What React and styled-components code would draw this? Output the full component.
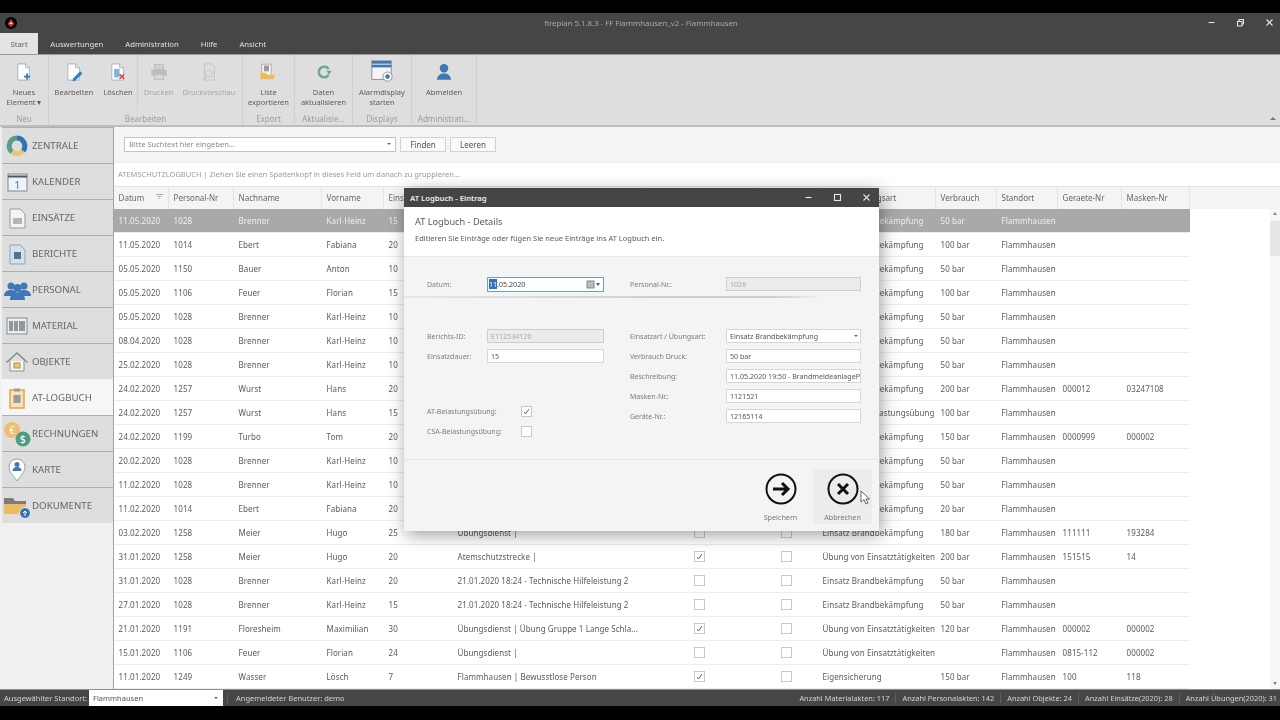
import React from 'react'
import styled, {createGlobalStyle} from 'styled-components'

const GlobalStyle = createGlobalStyle`
html, body {
  margin: 0;
  padding: 0;
  background: #000;
  font-family: "Noto Sans", "Liberation Sans", sans-serif;
}
* { box-sizing: border-box; }
`

const Screen = styled('div')`
  position: relative;
  width: 1280px;
  height: 720px;
  overflow: hidden;
  background: #000;
  padding: 13px 0 14px;
`

const Win = styled('div')`
  display: flex;
  flex-direction: column;
  height: 693px;
  background: #f2f2f2;
  filter: blur(0.35px);
`

const TitleBar = styled('div')`
  position: relative;
  display: flex;
  align-items: center;
  justify-content: center;
  flex: 0 0 20px;
  padding-left: 2px;
  background: #464646;
  color: #a8a8a8;
  font-size: 7.800px;
`

const Logo = styled('svg')`
  position: absolute;
  left: 5px;
  top: 4px;
`

const WinButtons = styled('div')`
  position: absolute;
  right: 6px;
  top: 5px;
  display: flex;
  gap: 20px;
`

const Tabs = styled('div')`
  display: flex;
  flex: 0 0 21px;
  background: #464646;
  font-size: 7.700px;
`

const Tab = styled('div')`
  display: flex;
  align-items: center;
  padding: 0 ${p => (p.$active ? '10.500px' : '11px')};
  color: ${p => (p.$active ? '#666' : '#e0e0e0')};
  background: ${p => (p.$active ? '#e4e4e4' : 'transparent')};
  &:first-child { margin-right: 1px; }
`

const Ribbon = styled('div')`
  position: relative;
  display: flex;
  flex: 0 0 73px;
  background: #dedede;
  border-top: 1px solid #9a9a9a;
  border-bottom: 2px solid #bdbdbd;
`

const RibbonGroup = styled('div')`
  display: flex;
  flex-direction: column;
  flex: 0 0 ${p => p.$w}px;
  border-right: 1px solid #d0d0d0;
`

const GroupItems = styled('div')`
  display: flex;
  flex: 1;
`

const GroupName = styled('div')`
  flex: 0 0 15px;
  min-height: 0;
  text-align: center;
  font-size: 8px;
  line-height: 17px;
  color: #9c9c9c;
  white-space: nowrap;
`

const RibbonItem = styled('div')`
  display: flex;
  flex-direction: column;
  align-items: center;
  flex: 0 0 ${p => p.$w}px;
  padding-top: 4px;
  font-size: 7.500px;
  line-height: 10px;
  text-align: center;
  color: ${p => (p.$off ? '#a6a6a6' : '#5c5c5c')};
  white-space: pre-line;
  border-right: ${p => (p.$rule ? '1px solid #d0d0d0' : 'none')};
`

const RibbonIcon = styled('div')`
  height: 25px;
  margin-bottom: 3px;
  display: flex;
  align-items: center;
  justify-content: center;
  & svg {
    width: ${p => (p.$big ? 24 : 20)}px;
    height: ${p => (p.$big ? 24 : 20)}px;
  }
`

const Collapse = styled('div')`
  position: absolute;
  right: 4px;
  bottom: 5px;
  width: 0;
  height: 0;
  border-left: 3px solid transparent;
  border-right: 3px solid transparent;
  border-bottom: 3px solid #777;
`

const Main = styled('div')`
  display: flex;
  flex: 1;
  min-height: 0;
`

const Side = styled('div')`
  display: flex;
  flex-direction: column;
  flex: 0 0 114px;
  padding-left: 2px;
  background: #f0f0f0;
  border-right: 1px solid #a3a3a3;
`

const SideItem = styled('div')`
  display: flex;
  align-items: center;
  height: 36px;
  background: ${p => (p.$active ? '#f6f6f6' : '#dedede')};
  border-top: 1px solid ${p => (p.$active ? '#f6f6f6' : '#aeaeae')};
  font-size: 9.700px;
  color: #666;
`

const SideIcon = styled('div')`
  display: flex;
  align-items: center;
  justify-content: center;
  flex: 0 0 30px;
`

const Content = styled('div')`
  display: flex;
  flex-direction: column;
  flex: 1;
  min-width: 0;
`

const SearchBar = styled('div')`
  display: flex;
  align-items: center;
  flex: 0 0 35px;
  padding: 0 0 1px 10px;
  gap: 4px;
  background: #f5f5f5;
  font-size: 8px;
`

const SearchInput = styled('div')`
  display: flex;
  align-items: center;
  justify-content: space-between;
  width: 272px;
  height: 15px;
  padding: 0 4px;
  background: #fff;
  border: 1px solid #c4c4c4;
  color: #8a8a8a;
  font-size: 7.500px;
`

const Caret = styled('span')`
  flex: none;
  width: 0;
  height: 0;
  border-left: 2px solid transparent;
  border-right: 2px solid transparent;
  border-top: 2px solid #666;
`

const PlainButton = styled('div')`
  display: flex;
  align-items: center;
  justify-content: center;
  width: 46px;
  height: 15px;
  background: #fafafa;
  border: 1px solid #d2d2d2;
  color: #555;
`

const GroupPanel = styled('div')`
  display: flex;
  align-items: center;
  flex: 0 0 24px;
  padding: 0 0 2px 4px;
  background: #fff;
  border-top: 1px solid #ececec;
  color: #9a9a9a;
  font-size: 7.500px;
`

const TableWrap = styled('div')`
  position: relative;
  flex: 1;
  min-height: 0;
  background: #fff;
`

const cols = '55px 65px 88px 62px 69px 192px 109px 64px 118px 61px 61px 64px 68px'

const HeadRow = styled('div')`
  display: grid;
  grid-template-columns: ${cols};
  height: 23px;
  background: #f4f4f4;
  border-top: 1px solid #e4e4e4;
`

const HeadCell = styled('div')`
  position: relative;
  display: flex;
  align-items: center;
  padding: 0 0 2px 4.600px;
  font-size: 8px;
  color: #666;
  border-right: 1px solid #e4e4e4;
  white-space: nowrap;
  overflow: hidden;
`

const SortMark = styled('svg')`
  position: absolute;
  right: 5px;
  top: 7px;
`

const Row = styled('div')`
  display: grid;
  grid-template-columns: ${cols};
  width: 1076px;
  height: 24px;
  background: ${p => (p.$sel ? '#a9a9a9' : '#fff')};
  color: ${p => (p.$sel ? '#efefef' : '#5a5a5a')};
  border-bottom: 1px solid #ededed;
`

const Cell = styled('div')`
  display: flex;
  align-items: center;
  justify-content: ${p => (p.$center ? 'center' : 'flex-start')};
  padding-left: ${p => (p.$center ? '0' : '4.600px')};
  font-size: 8px;
  letter-spacing: 0.07px;
  white-space: nowrap;
  overflow: hidden;
`

const Tick = styled('span')`
  display: flex;
  align-items: center;
  justify-content: center;
  flex: none;
  width: 11px;
  height: 11px;
  background: #fff;
  border: 1px solid #c8c8c8;
  color: #666;
`

const Scroll = styled('div')`
  position: absolute;
  right: 0;
  top: 23px;
  bottom: 0;
  width: 10px;
  background: #f7f7f7;
  display: flex;
  flex-direction: column;
  align-items: center;
  padding-top: 3px;
`

const ScrollUp = styled('span')`
  width: 0;
  height: 0;
  border-left: 2px solid transparent;
  border-right: 2px solid transparent;
  border-bottom: 3px solid #888;
`

const ScrollThumb = styled('span')`
  width: 100%;
  height: 35px;
  margin-top: 6px;
  background: #e6e6e6;
`

const ScrollDown = styled('span')`
  margin-top: auto;
  margin-bottom: 4px;
  width: 0;
  height: 0;
  border-left: 2px solid transparent;
  border-right: 2px solid transparent;
  border-top: 3px solid #888;
`

const StatusBar = styled('div')`
  display: flex;
  align-items: center;
  flex: 0 0 17px;
  padding: 0 3px 0 4px;
  background: #464646;
  border-top: 1px solid #8e8e8e;
  color: #d4d4d4;
  font-size: 7.500px;
  white-space: nowrap;
`

const StandortBox = styled('div')`
  display: flex;
  align-items: center;
  justify-content: space-between;
  width: 134px;
  height: 16px;
  margin: 0 4px 0 2px;
  padding: 0 5px 0 4px;
  background: #fff;
  color: #555;
`

const StatusCell = styled('div')`
  padding: 0 ${p => (p.$last ? '0' : '6px')} 0 ${p => (p.$first ? '8px' : '6px')};
  font-size: ${p => (p.$first ? '7.500px' : '7.400px')};
  border-left: ${p => (p.$plain ? 'none' : '1px solid #5e5e5e')};
  margin-left: ${p => (p.$push ? 'auto' : '0')};
`

const Modal = styled('div')`
  position: absolute;
  left: 404px;
  top: 188px;
  display: flex;
  flex-direction: column;
  width: 475px;
  height: 343px;
  background: #f4f4f4;
  box-shadow: 2px 4px 16px rgba(0, 0, 0, 0.38);
  filter: blur(0.35px);
`

const ModalTitle = styled('div')`
  position: relative;
  display: flex;
  align-items: center;
  flex: 0 0 19px;
  padding-left: 6px;
  background: #454545;
  color: #ececec;
  font-size: 7.700px;
  font-weight: 600;
`

const ModalButtons = styled('div')`
  position: absolute;
  right: 8.500px;
  top: 5px;
  display: flex;
  gap: 20px;
`

const ModalHead = styled('div')`
  flex: 0 0 50px;
  padding: 9px 11px 0;
  background: #fff;
  border-bottom: 1px solid #eaeaea;
  color: #5a5a5a;
`

const ModalHeading = styled('div')`
  font-size: 9.200px;
  line-height: 12px;
  margin-bottom: 4px;
`

const ModalSub = styled('div')`
  font-size: 7.500px;
  line-height: 12px;
`

const FormTop = styled('div')`
  display: flex;
  flex: 0 0 39px;
  padding: 20px 0 0 23px;
`

const Rule = styled('div')`
  flex: none;
  width: 414px;
  height: 2px;
  background: linear-gradient(to right, #e6e6e6, #cfcfcf 60%, #cfcfcf 90%, #efefef);
`

const FormCols = styled('div')`
  display: flex;
  flex: none;
  padding: 31px 0 0 23px;
`

const FormCol = styled('div')`
  display: flex;
  flex-direction: column;
  gap: 6px;
  width: ${p => p.$w}px;
`

const Field = styled('div')`
  display: flex;
  align-items: center;
  height: 14px;
  margin-top: ${p => p.$mt || 0}px;
`

const Label = styled('div')`
  flex: 0 0 ${p => p.$w}px;
  min-width: 0;
  margin-left: ${p => p.$ml || 0}px;
  font-size: 7px;
  color: #7c7c7c;
  white-space: nowrap;
`

const Input = styled('div')`
  display: flex;
  align-items: center;
  justify-content: space-between;
  flex: none;
  width: ${p => p.$w}px;
  height: 14px;
  padding: 0 2px 0 3px;
  background: ${p => (p.$off ? '#ececec' : '#fff')};
  border: 1px solid ${p => (p.$off ? '#cdcdcd' : '#d6d6d6')};
  color: ${p => (p.$off ? '#a8a8a8' : '#555')};
  font-size: 7.100px;
  white-space: nowrap;
  overflow: hidden;
`

const DateInput = styled(Input)`
  height: 15px;
  padding: 0 3px 0 1px;
  border-color: #6f9ecb;
  color: #444;
`

const Selected = styled('span')`
  background: #2d74bd;
  color: #fff;
`

const FormCheck = styled(Tick)`
  margin-left: 34px;
`

const ModalFoot = styled('div')`
  display: flex;
  justify-content: flex-end;
  gap: 3px;
  flex: 1;
  margin-top: 21px;
  padding: 9px 7px 0 0;
  border-top: 1px solid #e6e6e6;
`

const Action = styled('div')`
  position: relative;
  display: flex;
  flex-direction: column;
  align-items: center;
  width: 59px;
  height: 55px;
  padding: 3.500px 0 2px;
  background: ${p => (p.$hover ? '#ececec' : 'transparent')};
  font-size: 7.200px;
  color: #7a7a7a;
  & > svg:first-child { flex: none; }
`

const ActionText = styled('div')`
  margin-top: auto;
`

const Cursor = styled('svg')`
  position: absolute;
  left: 47px;
  top: 21px;
`

const WinGlyph = ({type, size = 9}) => (
  <svg width={size} height={size} viewBox="0 0 9 9" fill="none" stroke="#e4e4e4" strokeWidth="1.100">
    {type === 'min' && <path d="M1.500 4.500h6" />}
    {type === 'max' && <rect x="1.500" y="1.500" width="6" height="6" />}
    {type === 'restore' && <path d="M1.500 3.500h4.500v4.500h-4.500zM3 3.500v-2h4.500v4.500h-1.500" />}
    {type === 'close' && <path d="M1.500 1.500l6 6M7.500 1.500l-6 6" />}
  </svg>
)

const Doc = ({children, stroke = '#9aa5ae'}) => (
  <svg width="26" height="26" viewBox="0 0 26 26" fill="none">
    <path d="M5 2.500h10l5 5v16h-15z" fill="#fff" stroke={stroke} />
    <path d="M15 2.500v5h5" fill="#e8e8e8" stroke={stroke} />
    {children}
  </svg>
)

const icons = {
  neu: (
    <Doc>
      <path d="M17 15v8M13 19h8" stroke="#2f7fc1" strokeWidth="2.400" />
    </Doc>
  ),
  edit: (
    <Doc>
      <path d="M12 21l9-9 3 3-9 9-4 1z" fill="#2f7fc1" />
    </Doc>
  ),
  del: (
    <Doc>
      <rect x="8" y="9" width="7" height="11" fill="#7fb2de" />
      <path d="M15 16l6 6M21 16l-6 6" stroke="#d9472b" strokeWidth="2" />
    </Doc>
  ),
  print: (
    <svg width="26" height="26" viewBox="0 0 26 26" fill="#bdbdbd">
      <rect x="7" y="3" width="12" height="7" fill="#cfcfcf" stroke="#b8b8b8" />
      <rect x="3" y="10" width="20" height="8" rx="1" />
      <rect x="7" y="16" width="12" height="7" fill="#d6d6d6" stroke="#b8b8b8" />
    </svg>
  ),
  preview: (
    <svg width="26" height="26" viewBox="0 0 26 26" fill="none" stroke="#bebebe">
      <path d="M7 2.500h9l4 4v17h-13z" />
      <circle cx="13" cy="15" r="4.500" />
      <path d="M10 18.500l-4 4" strokeWidth="1.600" />
    </svg>
  ),
  list: (
    <svg width="28" height="26" viewBox="0 0 28 26">
      <rect x="4" y="2" width="13" height="16" fill="#f4f4f4" stroke="#9a9a9a" />
      <rect x="7" y="4" width="7" height="8" fill="#9a9a9a" />
      <path d="M2 14h8l2 3h11l-3 6H2z" fill="#eebb55" />
    </svg>
  ),
  refresh: (
    <svg width="26" height="26" viewBox="0 0 26 26" fill="none">
      <path d="M19 17a7 7 0 1 1 0-8" stroke="#6ba596" strokeWidth="3.200" />
      <path d="M16 11.500h7l-3.500 5z" fill="#6ba596" />
    </svg>
  ),
  alarm: (
    <svg width="26" height="26" viewBox="0 0 26 26">
      <rect x="2" y="1" width="21" height="20" fill="#f5f5f5" stroke="#8b8b8b" />
      <rect x="2" y="1" width="21" height="3" fill="#3f78b5" />
      <rect x="2" y="5" width="21" height="3" fill="#3f78b5" />
      <circle cx="19" cy="18" r="5" fill="#fff" stroke="#8b8b8b" />
      <circle cx="19" cy="18" r="2.500" fill="#3f78b5" />
    </svg>
  ),
  user: (
    <svg width="26" height="26" viewBox="0 0 26 26" fill="#3b78b4">
      <circle cx="13" cy="8" r="5.500" />
      <path d="M4 23c0-5 4-7 6-8h6c2 1 6 3 6 8z" />
    </svg>
  ),
  zentrale: (
    <svg width="24" height="24" viewBox="0 0 24 24" fill="none" strokeWidth="5">
      <path d="M12 4a8 8 0 0 0-5 14" stroke="#5b9c8b" />
      <path d="M12 4a8 8 0 0 1 6 13" stroke="#2f74b5" />
      <path d="M7 18a8 8 0 0 0 11-1" stroke="#e3c878" />
    </svg>
  ),
  kalender: (
    <svg width="24" height="24" viewBox="0 0 24 24">
      <rect x="3" y="4" width="19" height="17" fill="#eef3f7" stroke="#7d8a94" />
      <path d="M3 6.500h19" stroke="#555" strokeWidth="2" />
      <text x="12.500" y="18.500" textAnchor="middle" fontSize="11" fill="#3f78b5" fontFamily="Noto Sans, sans-serif">1</text>
    </svg>
  ),
  einsatz: (
    <svg width="24" height="24" viewBox="0 0 24 24">
      <path d="M5 3h10l5 5v14H5z" fill="#f4f4f4" stroke="#9a9a9a" />
      <rect x="8" y="12" width="9" height="6" fill="#b5b5b5" />
    </svg>
  ),
  bericht: (
    <svg width="24" height="24" viewBox="0 0 24 24">
      <path d="M5 3h10l5 5v14H5z" fill="#cfe1f2" stroke="#8ea4b8" />
      <rect x="9" y="10" width="7" height="7" fill="#5c7084" />
    </svg>
  ),
  personal: (
    <svg width="27" height="24" viewBox="0 0 27 24" fill="#3f78b5">
      <circle cx="7" cy="8" r="3.500" />
      <circle cx="20" cy="8" r="3.500" />
      <path d="M0 18c0-4 3-6 7-6s7 2 7 6zM13 18c0-4 3-6 7-6s7 2 7 6z" />
      <circle cx="13.500" cy="10" r="4" />
      <path d="M6 22c0-5 3-7 7.500-7s7.500 2 7.500 7z" />
    </svg>
  ),
  material: (
    <svg width="24" height="20" viewBox="0 0 24 20">
      <rect x="2" y="2" width="20" height="16" fill="#e8eef4" stroke="#7e8c99" />
      <path d="M5 5v10M7 5v10M10 5v10M12 5v10M15 5v10M17 5v10M19 5v10" stroke="#5b5b5b" strokeWidth="1.200" />
    </svg>
  ),
  objekte: (
    <svg width="24" height="24" viewBox="0 0 24 24" fill="none">
      <path d="M1.500 12.500L12 3l10.500 9.500" stroke="#7f8a8f" strokeWidth="1.500" />
      <path d="M5 11v10h14V11" fill="#f6f6f6" stroke="#8d8d8d" />
      <rect x="9" y="13" width="6" height="5" fill="#e8c478" stroke="#b8913f" />
    </svg>
  ),
  logbuch: (
    <svg width="24" height="24" viewBox="0 0 24 24">
      <rect x="5" y="4" width="14" height="18" fill="#f3e3bf" stroke="#e3ac48" strokeWidth="1.600" />
      <rect x="9" y="2.500" width="6" height="3" fill="#9a9a9a" />
      <rect x="8.500" y="9" width="7" height="8" fill="#9a9a9a" />
    </svg>
  ),
  rechnung: (
    <svg width="30" height="28" viewBox="0 0 30 28">
      <circle cx="10" cy="10" r="8" fill="#eebf73" />
      <text x="10" y="13.500" textAnchor="middle" fontSize="10" fill="#fff" fontFamily="Noto Sans, sans-serif">€</text>
      <circle cx="21" cy="19" r="7.500" fill="#4f9c84" />
      <text x="21" y="23" textAnchor="middle" fontSize="11" fill="#fff" fontFamily="Noto Sans, sans-serif">$</text>
    </svg>
  ),
  karte: (
    <svg width="24" height="26" viewBox="0 0 24 26">
      <path d="M12 24C8 18 4 15 4 10a8 8 0 0 1 16 0c0 5-4 8-8 14z" fill="#fff" stroke="#a0a0a0" />
      <circle cx="12" cy="7.500" r="2.500" fill="#3f78b5" />
      <path d="M7.500 14c0-3 2-4 4.500-4s4.500 1 4.500 4z" fill="#3f78b5" />
    </svg>
  ),
  dokumente: (
    <svg width="30" height="26" viewBox="0 0 30 26">
      <path d="M2 5h9l2 3h11v8H2z" fill="#7c7c7c" />
      <path d="M2 11h22v10H2z" fill="#e9bc62" />
      <circle cx="23" cy="20" r="5.500" fill="#3874b3" stroke="#f0f0f0" />
      <path d="M23 23v-5M21 20l2-2 2 2" stroke="#fff" fill="none" />
    </svg>
  ),
}

const sideItems = [
  ['zentrale', 'ZENTRALE'],
  ['kalender', 'KALENDER'],
  ['einsatz', 'EINSÄTZE'],
  ['bericht', 'BERICHTE'],
  ['personal', 'PERSONAL'],
  ['material', 'MATERIAL'],
  ['objekte', 'OBJEKTE'],
  ['logbuch', 'AT-LOGBUCH'],
  ['rechnung', 'RECHNUNGEN'],
  ['karte', 'KARTE'],
  ['dokumente', 'DOKUMENTE'],
]

// the middle three headers sit fully behind the dialog
const heads = ['Datum', 'Personal-Nr', 'Nachname', 'Vorname', 'Einsatzdauer', '', '', '', 'Einsatz / Übungsart', 'Verbrauch', 'Standort', 'Geraete-Nr', 'Masken-Nr']

const brand = 'Einsatz Brandbekämpfung'
const uebung = 'Übung von Einsatztätigkeiten'
const th2 = '21.01.2020 18:24 - Technische Hilfeleistung 2'

const rows = [
  ['11.05.2020', '1028', 'Brenner', 'Karl-Heinz', '15', '', 1, 0, brand, '50 bar', '', ''],
  ['11.05.2020', '1014', 'Ebert', 'Fabiana', '20', '', 0, 0, brand, '100 bar', '', ''],
  ['05.05.2020', '1150', 'Bauer', 'Anton', '10', '', 0, 0, brand, '50 bar', '', ''],
  ['05.05.2020', '1106', 'Feuer', 'Florian', '15', '', 0, 0, brand, '100 bar', '', ''],
  ['05.05.2020', '1028', 'Brenner', 'Karl-Heinz', '10', '', 0, 0, brand, '50 bar', '', ''],
  ['08.04.2020', '1028', 'Brenner', 'Karl-Heinz', '10', '', 0, 0, brand, '50 bar', '', ''],
  ['25.02.2020', '1028', 'Brenner', 'Karl-Heinz', '10', '', 0, 0, brand, '50 bar', '', ''],
  ['24.02.2020', '1257', 'Wurst', 'Hans', '20', '', 0, 0, brand, '200 bar', '000012', '03247108'],
  ['24.02.2020', '1257', 'Wurst', 'Hans', '15', '', 0, 0, 'Atemschutzbelastungsübung', '100 bar', '', ''],
  ['24.02.2020', '1199', 'Turbo', 'Tom', '20', '', 0, 0, brand, '150 bar', '0000999', '000002'],
  ['20.02.2020', '1028', 'Brenner', 'Karl-Heinz', '10', '', 0, 0, brand, '50 bar', '', ''],
  ['11.02.2020', '1028', 'Brenner', 'Karl-Heinz', '10', '', 0, 0, brand, '50 bar', '', ''],
  ['11.02.2020', '1014', 'Ebert', 'Fabiana', '20', '', 0, 0, brand, '20 bar', '', ''],
  ['03.02.2020', '1258', 'Meier', 'Hugo', '25', 'Übungsdienst |', 0, 0, brand, '180 bar', '111111', '193284'],
  ['31.01.2020', '1258', 'Meier', 'Hugo', '20', 'Atemschutzstrecke |', 1, 0, uebung, '200 bar', '151515', '14'],
  ['31.01.2020', '1028', 'Brenner', 'Karl-Heinz', '20', th2, 0, 0, brand, '50 bar', '', ''],
  ['27.01.2020', '1028', 'Brenner', 'Karl-Heinz', '15', th2, 0, 0, brand, '50 bar', '', ''],
  ['21.01.2020', '1191', 'Floresheim', 'Maximilian', '30', 'Übungsdienst | Übung Gruppe 1  Lange Schla...', 1, 0, uebung, '120 bar', '000002', '000002'],
  ['15.01.2020', '1106', 'Feuer', 'Florian', '24', 'Übungsdienst |', 0, 0, uebung, '', '0815-112', '000002'],
  ['11.01.2020', '1249', 'Wasser', 'Lösch', '7', 'Flammhausen | Bewusstlose Person', 1, 0, 'Eigensicherung', '150 bar', '100', '118'],
]

const TickMark = () => (
  <svg width="7" height="7" viewBox="0 0 7 7" fill="none" stroke="#666">
    <path d="M1 4l1.500 2L6 1" />
  </svg>
)

const CircleButton = ({children}) => (
  <svg width="32" height="32" viewBox="0 0 32 32" fill="none" stroke="#111">
    <circle cx="16" cy="16" r="14.500" strokeWidth="2" />
    {children}
  </svg>
)

export default function App() {
  return (
    <Screen>
      <GlobalStyle />
      <Win>
        <TitleBar>
          <Logo width="12" height="12" viewBox="0 0 12 12">
            <circle cx="6" cy="6" r="6" fill="#000" />
            <path d="M6 2l3.500 5-3.500 3-3.500-3z" fill="#d8343a" />
            <path d="M6 5l1.500 2H4.500z" fill="#fff" />
          </Logo>
          fireplan 5.1.8.3 - FF Flammhausen_v2 - Flammhausen
          <WinButtons>
            <WinGlyph type="min" />
            <WinGlyph type="restore" />
            <WinGlyph type="close" />
          </WinButtons>
        </TitleBar>
        <Tabs>
          <Tab $active>Start</Tab>
          <Tab>Auswertungen</Tab>
          <Tab>Administration</Tab>
          <Tab>Hilfe</Tab>
          <Tab>Ansicht</Tab>
        </Tabs>
        <Ribbon>
          <RibbonGroup $w={49}>
            <GroupItems>
              <RibbonItem $w={48}><RibbonIcon>{icons.neu}</RibbonIcon>{'Neues\nElement ▾'}</RibbonItem>
            </GroupItems>
            <GroupName>Neu</GroupName>
          </RibbonGroup>
          <RibbonGroup $w={194}>
            <GroupItems>
              <RibbonItem $w={50}><RibbonIcon>{icons.edit}</RibbonIcon>Bearbeiten</RibbonItem>
              <RibbonItem $w={39} $rule><RibbonIcon>{icons.del}</RibbonIcon>Löschen</RibbonItem>
              <RibbonItem $w={41} $off><RibbonIcon>{icons.print}</RibbonIcon>Drucken</RibbonItem>
              <RibbonItem $w={60} $off><RibbonIcon>{icons.preview}</RibbonIcon>Druckvorschau</RibbonItem>
            </GroupItems>
            <GroupName>Bearbeiten</GroupName>
          </RibbonGroup>
          <RibbonGroup $w={52}>
            <GroupItems>
              <RibbonItem $w={51}><RibbonIcon>{icons.list}</RibbonIcon>{'Liste\nexportieren'}</RibbonItem>
            </GroupItems>
            <GroupName>Export</GroupName>
          </RibbonGroup>
          <RibbonGroup $w={58}>
            <GroupItems>
              <RibbonItem $w={57}><RibbonIcon>{icons.refresh}</RibbonIcon>{'Daten\naktualisieren'}</RibbonItem>
            </GroupItems>
            <GroupName>Aktualisie...</GroupName>
          </RibbonGroup>
          <RibbonGroup $w={59}>
            <GroupItems>
              <RibbonItem $w={58}><RibbonIcon $big>{icons.alarm}</RibbonIcon>{'Alarmdisplay\nstarten'}</RibbonItem>
            </GroupItems>
            <GroupName>Displays</GroupName>
          </RibbonGroup>
          <RibbonGroup $w={65}>
            <GroupItems>
              <RibbonItem $w={64}><RibbonIcon>{icons.user}</RibbonIcon>Abmelden</RibbonItem>
            </GroupItems>
            <GroupName>Administrati...</GroupName>
          </RibbonGroup>
          <Collapse />
        </Ribbon>
        <Main>
          <Side>
            {sideItems.map(([key, label]) => (
              <SideItem key={key} $active={key === 'logbuch'}>
                <SideIcon>{icons[key]}</SideIcon>
                {label}
              </SideItem>
            ))}
          </Side>
          <Content>
            <SearchBar>
              <SearchInput>
                Bitte Suchtext hier eingeben...
                <Caret />
              </SearchInput>
              <PlainButton>Finden</PlainButton>
              <PlainButton>Leeren</PlainButton>
            </SearchBar>
            <GroupPanel>ATEMSCHUTZLOGBUCH | Ziehen Sie einen Spaltenkopf in dieses Feld um danach zu gruppieren...</GroupPanel>
            <TableWrap>
              <HeadRow>
                {heads.map((h, i) => (
                  <HeadCell key={i}>
                    {h}
                    {i === 0 && (
                      <SortMark width="7" height="6" viewBox="0 0 7 6" stroke="#aaa" fill="none">
                        <path d="M0 .5h7M1.500 2.500h4M3 4.500h1" />
                      </SortMark>
                    )}
                  </HeadCell>
                ))}
              </HeadRow>
              {rows.map((r, i) => (
                <Row key={i} $sel={i === 0}>
                  <Cell>{r[0]}</Cell>
                  <Cell>{r[1]}</Cell>
                  <Cell>{r[2]}</Cell>
                  <Cell>{r[3]}</Cell>
                  <Cell>{r[4]}</Cell>
                  <Cell>{r[5]}</Cell>
                  <Cell $center><Tick>{r[6] ? <TickMark /> : null}</Tick></Cell>
                  <Cell $center><Tick>{r[7] ? <TickMark /> : null}</Tick></Cell>
                  <Cell>{r[8]}</Cell>
                  <Cell>{r[9]}</Cell>
                  <Cell>Flammhausen</Cell>
                  <Cell>{r[10]}</Cell>
                  <Cell>{r[11]}</Cell>
                </Row>
              ))}
              <Scroll>
                <ScrollUp />
                <ScrollThumb />
                <ScrollDown />
              </Scroll>
            </TableWrap>
          </Content>
        </Main>
        <StatusBar>
          Ausgewählter Standort:
          <StandortBox>
            Flammhausen
            <Caret />
          </StandortBox>
          <StatusCell $first>Angemeldeter Benutzer: demo</StatusCell>
          <StatusCell $push $plain>Anzahl Materialakten: 117</StatusCell>
          <StatusCell>Anzahl Personalakten: 142</StatusCell>
          <StatusCell>Anzahl Objekte: 24</StatusCell>
          <StatusCell>Anzahl Einsätze(2020): 28</StatusCell>
          <StatusCell $last>Anzahl Übungen(2020): 31</StatusCell>
        </StatusBar>
      </Win>
      <Modal>
        <ModalTitle>
          AT Logbuch - Eintrag
          <ModalButtons>
            <WinGlyph type="min" />
            <WinGlyph type="max" />
            <WinGlyph type="close" />
          </ModalButtons>
        </ModalTitle>
        <ModalHead>
          <ModalHeading>AT Logbuch - Details</ModalHeading>
          <ModalSub>Editieren Sie Einträge oder fügen Sie neue Einträge ins AT Logbuch ein.</ModalSub>
        </ModalHead>
        <FormTop>
          <Field>
            <Label $w={60}>Datum:</Label>
            <DateInput $w={117}>
              <span><Selected>11</Selected>.05.2020</span>
              <svg width="14" height="9" viewBox="0 0 14 9">
                <rect x="1" y="1" width="7" height="7" fill="#bbb" stroke="#888" />
                <path d="M10 3h4l-2 3z" fill="#555" />
              </svg>
            </DateInput>
          </Field>
          <Field>
            <Label $w={96} $ml={26}>Personal-Nr.:</Label>
            <Input $w={135} $off>1028</Input>
          </Field>
        </FormTop>
        <Rule />
        <FormCols>
          <FormCol $w={203}>
            <Field>
              <Label $w={60}>Berichts-ID:</Label>
              <Input $w={117} $off>E112534120</Input>
            </Field>
            <Field>
              <Label $w={60}>Einsatzdauer:</Label>
              <Input $w={117}>15</Input>
            </Field>
            <Field $mt={35}>
              <Label $w={60}>AT-Belastungsübung:</Label>
              <FormCheck><TickMark /></FormCheck>
            </Field>
            <Field>
              <Label $w={60}>CSA-Belastungsübung:</Label>
              <FormCheck />
            </Field>
          </FormCol>
          <FormCol $w={231}>
            <Field>
              <Label $w={96}>Einsatzart / Übungsart:</Label>
              <Input $w={135}>Einsatz Brandbekämpfung<Caret /></Input>
            </Field>
            <Field>
              <Label $w={96}>Verbrauch Druck:</Label>
              <Input $w={135}>50 bar</Input>
            </Field>
            <Field>
              <Label $w={96}>Beschreibung:</Label>
              <Input $w={135}>11.05.2020 19:50 - BrandmeldeanlageP</Input>
            </Field>
            <Field>
              <Label $w={96}>Masken-Nr.:</Label>
              <Input $w={135}>1121521</Input>
            </Field>
            <Field>
              <Label $w={96}>Geräte-Nr.:</Label>
              <Input $w={135}>12165114</Input>
            </Field>
          </FormCol>
        </FormCols>
        <ModalFoot>
          <Action>
            <CircleButton>
              <path d="M8 16h15M17 10l6 6-6 6" strokeWidth="3" />
            </CircleButton>
            <ActionText>Speichern</ActionText>
          </Action>
          <Action $hover>
            <CircleButton>
              <path d="M11 11l10 10M21 11L11 21" strokeWidth="3" />
            </CircleButton>
            <ActionText>Abbrechen</ActionText>
            <Cursor width="10" height="15" viewBox="0 0 10 15">
              <path d="M1 1v11l3-2.500 2 4.500 2-1-2-4h3.500z" fill="#fff" stroke="#444" strokeWidth=".8" />
            </Cursor>
          </Action>
        </ModalFoot>
      </Modal>
    </Screen>
  )
}
